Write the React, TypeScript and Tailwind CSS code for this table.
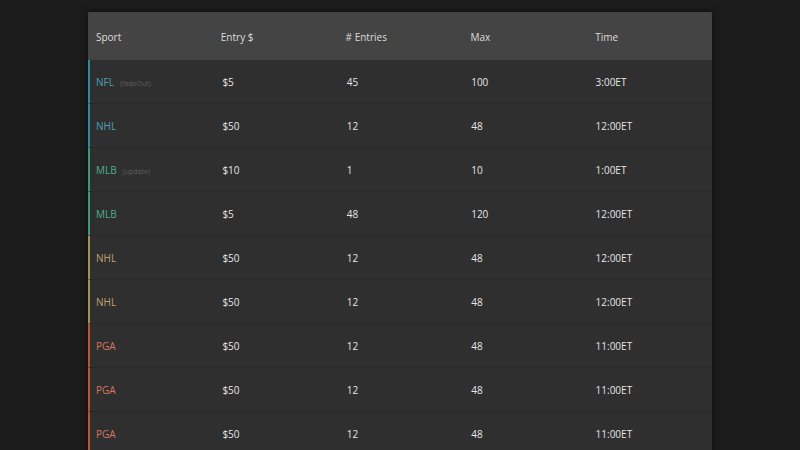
const rows = [
  { sport: 'NFL', tag: '(fadeOut)', entry: '$5', entries: '45', max: '100', time: '3:00ET', text: 'text-[#4aa3b8]', border: 'border-[#2f8aa0]' },
  { sport: 'NHL', tag: '', entry: '$50', entries: '12', max: '48', time: '12:00ET', text: 'text-[#4aa3b8]', border: 'border-[#2f8aa0]' },
  { sport: 'MLB', tag: '(update)', entry: '$10', entries: '1', max: '10', time: '1:00ET', text: 'text-[#4cae8c]', border: 'border-[#3a9a74]' },
  { sport: 'MLB', tag: '', entry: '$5', entries: '48', max: '120', time: '12:00ET', text: 'text-[#4cae8c]', border: 'border-[#3a9a74]' },
  { sport: 'NHL', tag: '', entry: '$50', entries: '12', max: '48', time: '12:00ET', text: 'text-[#bfa46c]', border: 'border-[#a8914f]' },
  { sport: 'NHL', tag: '', entry: '$50', entries: '12', max: '48', time: '12:00ET', text: 'text-[#bfa46c]', border: 'border-[#a8914f]' },
  { sport: 'PGA', tag: '', entry: '$50', entries: '12', max: '48', time: '11:00ET', text: 'text-[#d8775c]', border: 'border-[#c0532f]' },
  { sport: 'PGA', tag: '', entry: '$50', entries: '12', max: '48', time: '11:00ET', text: 'text-[#d8775c]', border: 'border-[#c0532f]' },
  { sport: 'PGA', tag: '', entry: '$50', entries: '12', max: '48', time: '11:00ET', text: 'text-[#d8775c]', border: 'border-[#c0532f]' },
]

const headers = ['Sport', 'Entry $', '# Entries', 'Max', 'Time']

export default function App() {
  return (
    <div className="h-[450px] overflow-hidden bg-[#1c1c1c] pt-3 font-['Open_Sans',sans-serif] text-[10px] text-[#e6e6e6]">
      <div className="ml-[88px] w-[624px] shadow-[0_0_6px_rgba(0,0,0,0.6)]">
        {/* Header */}
        <div className="grid grid-cols-5 h-12 items-center bg-[#444444] pt-0.5 text-[#dcdcdc]">
          {headers.map((h) => (
            <div key={h} className="pl-2">{h}</div>
          ))}
        </div>

        {/* Rows */}
        {rows.map((r, idx) => (
          <div
            key={idx}
            className={`grid grid-cols-5 h-11 items-center bg-[#2f2f2f] pt-0.5 border-l-2 border-b border-b-[#2a2a2a] ${r.border}`}
          >
            <div className="pl-1.5 flex items-baseline gap-1.5">
              <span className={r.text}>{r.sport}</span>
              {r.tag && <span className="text-[7px] text-[#5e5e5e]">{r.tag}</span>}
            </div>
            <div className="pl-2">{r.entry}</div>
            <div className="pl-2">{r.entries}</div>
            <div className="pl-2">{r.max}</div>
            <div className="pl-2">{r.time}</div>
          </div>
        ))}
      </div>
    </div>
  )
}
